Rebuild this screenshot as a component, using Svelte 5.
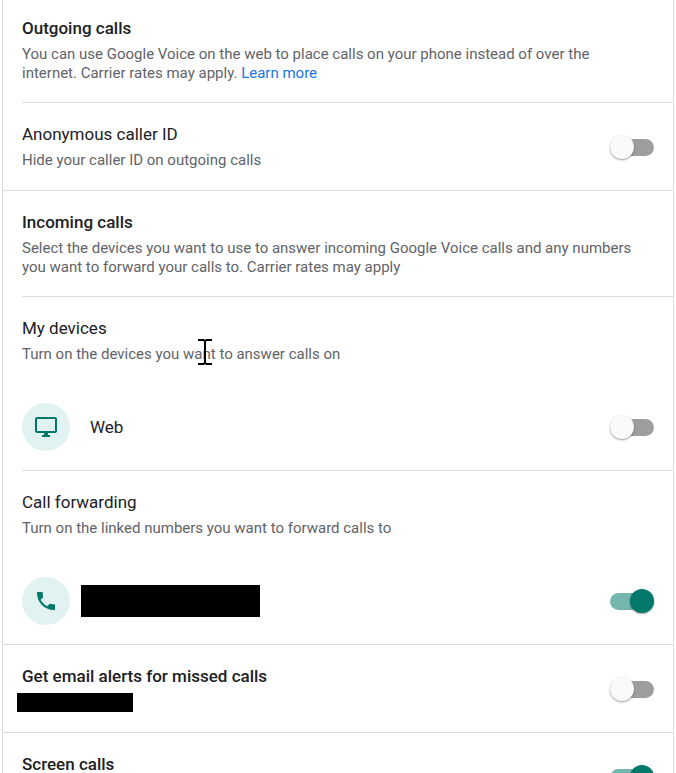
<script>
    let anonymous = $state(false);
    let web = $state(false);
    let forwarding = $state(true);
    let emailAlerts = $state(false);
    let screenCalls = $state(true);
</script>

<main class="settings">
    <section class="section">
        <h2 class="title strong">Outgoing calls</h2>
        <p class="desc">
            You can use Google Voice on the web to place calls on your phone instead of over the
            internet. Carrier rates may apply. <a href="#learn-more">Learn more</a>
        </p>
    </section>

    <section class="section inset">
        <div class="row">
            <div class="text">
                <h3 class="title"><label for="anonymous">Anonymous caller ID</label></h3>
                <p class="desc">Hide your caller ID on outgoing calls</p>
            </div>
            <input class="switch" type="checkbox" role="switch" id="anonymous" bind:checked={anonymous}>
        </div>
    </section>

    <section class="section">
        <h2 class="title strong">Incoming calls</h2>
        <p class="desc">
            Select the devices you want to use to answer incoming Google Voice calls and any numbers
            you want to forward your calls to. Carrier rates may apply
        </p>
    </section>

    <section class="section inset">
        <h3 class="title">My devices</h3>
        <p class="desc">
            Turn on the devices you want to answer calls on
            <svg class="cursor" viewBox="0 0 14 26" width="14" height="26" aria-hidden="true">
                <path d="M0 1h5.5l1.5 1l1.5 -1H14M7 1v24M0 25h5.5l1.5 -1l1.5 1H14" fill="none" stroke="#000" stroke-width="2" />
            </svg>
        </p>
        <div class="row device">
            <span class="icon">
                <svg viewBox="0 0 24 24" width="24" height="24" aria-hidden="true">
                    <path d="M21 2H3c-1.1 0-2 .9-2 2v12c0 1.1.9 2 2 2h7v2H8v2h8v-2h-2v-2h7c1.1 0 2-.9 2-2V4c0-1.1-.9-2-2-2zm0 14H3V4h18v12z" />
                </svg>
            </span>
            <label class="device-name" for="web">Web</label>
            <input class="switch" type="checkbox" role="switch" id="web" bind:checked={web}>
        </div>
    </section>

    <section class="section inset">
        <h3 class="title">Call forwarding</h3>
        <p class="desc">Turn on the linked numbers you want to forward calls to</p>
        <div class="row device">
            <span class="icon">
                <svg viewBox="0 0 24 24" width="24" height="24" aria-hidden="true">
                    <path d="M21 15.46l-5.27-.61-2.52 2.52c-2.83-1.44-5.15-3.75-6.59-6.59l2.53-2.53L8.54 3H3.03C2.45 13.18 10.82 21.55 21 20.97v-5.51z" />
                </svg>
            </span>
            <span class="redacted number"></span>
            <input class="switch" type="checkbox" role="switch" aria-label="Linked number" bind:checked={forwarding}>
        </div>
    </section>

    <section class="section full">
        <div class="row">
            <div class="text">
                <h2 class="title strong"><label for="email">Get email alerts for missed calls</label></h2>
                <span class="redacted email"></span>
            </div>
            <input class="switch" type="checkbox" role="switch" id="email" bind:checked={emailAlerts}>
        </div>
    </section>

    <section class="section">
        <div class="row">
            <div class="text">
                <h2 class="title strong"><label for="screen">Screen calls</label></h2>
            </div>
            <input class="switch" type="checkbox" role="switch" id="screen" bind:checked={screenCalls}>
        </div>
    </section>
</main>

<style>
    :global(body) {
        background: #fff;
    }

    .settings {
        height: 100vh;
        margin: 0 2px;
        box-sizing: border-box;
        overflow: hidden;
        border: solid #dadce0;
        border-width: 0 1px;
        color: #202124;
        font-family: Roboto, "Liberation Sans", sans-serif;
    }

    .section {
        padding: 20px 19px 19px;
        border-top: 1px solid #dadce0;
    }

    .section:first-child {
        padding-top: 17px;
        border-top: none;
    }

    /* divider starts at the text instead of the card edge */
    .section.inset {
        margin-left: 19px;
        padding-left: 0;
    }

    .title {
        margin: 0 0 5px;
        font-size: 17px;
        line-height: 23px;
        font-weight: 400;
    }

    .title.strong {
        font-weight: 500;
    }

    .desc {
        position: relative;
        margin: 0;
        padding-right: 14px;
        font-size: 15px;
        line-height: 19px;
        color: #5f6368;
    }

    .desc a {
        color: #1a73e8;
        text-decoration: none;
    }

    .cursor {
        position: absolute;
        left: 176px;
        top: -6px;
    }

    .row {
        display: flex;
        align-items: center;
        min-height: 48px;
    }

    .text {
        flex: 1;
        align-self: flex-start;
    }

    .device {
        margin-top: 39px;
    }

    .icon {
        display: flex;
        align-items: center;
        justify-content: center;
        width: 48px;
        height: 48px;
        border-radius: 50%;
        background: #e0f2f1;
        fill: #00796b;
    }

    .device-name {
        margin-left: 20px;
        font-size: 17px;
    }

    .redacted {
        display: block;
        background: #000;
    }

    .number {
        width: 179px;
        height: 32px;
        margin-left: 11px;
    }

    .email {
        width: 116px;
        height: 19px;
        margin-left: -5px;
    }

    .switch {
        appearance: none;
        position: relative;
        display: flex;
        align-items: center;
        flex: none;
        width: 44px;
        height: 24px;
        margin: 0 0 0 auto;
        cursor: pointer;
    }

    .switch::before {
        content: "";
        width: 44px;
        height: 17px;
        border-radius: 9px;
        background: #9e9e9e;
    }

    .switch::after {
        content: "";
        position: absolute;
        left: 0;
        width: 24px;
        height: 24px;
        border-radius: 50%;
        background: #fafafa;
        box-shadow: 0 1px 2px rgba(0, 0, 0, .4);
    }

    .switch:checked::before {
        background: #74b5ae;
    }

    .switch:checked::after {
        left: 20px;
        background: #00796b;
    }
</style>
